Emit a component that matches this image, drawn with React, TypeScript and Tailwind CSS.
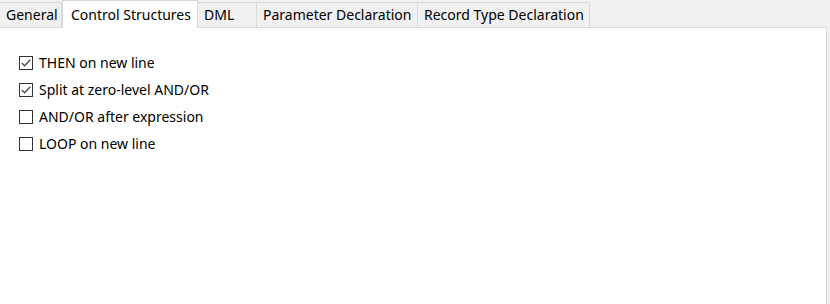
import React from "react";

const tabs = [
    { label: "General", w: "w-[62px]" },
    { label: "Control Structures", w: "w-[136px]" },
    { label: "DML", w: "w-[59px]" },
    { label: "Parameter Declaration", w: "w-[161px]" },
    { label: "Record Type Declaration", w: "w-[172px]" },
];

const options = [
    { label: "THEN on new line", checked: true },
    { label: "Split at zero-level AND/OR", checked: true },
    { label: "AND/OR after expression", checked: false },
    { label: "LOOP on new line", checked: false },
];

const CheckBox = ({ checked }: { checked: boolean }) => (
    <span className="flex h-[14px] w-[14px] shrink-0 items-center justify-center border border-[#333333] bg-white">
        {checked && (
            <svg width="12" height="12" viewBox="0 0 12 12">
                <path d="M1.8 6 L4.6 8.8 L10.3 2.8" fill="none" stroke="#4a4a4a" strokeWidth="1.3" />
            </svg>
        )}
    </span>
);

export default function App() {
    return (
        <div className="flex h-[304px] w-[830px] flex-col bg-[#f0f0f0] text-[14px] text-black" style={{ fontFamily: '"Noto Sans", "Open Sans", sans-serif' }}>
            <div className="flex h-[27px] items-end">
                {tabs.map((t, i) =>
                    i === 1 ? (
                        <div key={t.label} className={"relative z-10 -mb-px flex h-[28px] shrink-0 items-start border-x border-t border-[#d9d9d9] bg-white pl-[8px] pt-[3px] " + t.w}>
                            {t.label}
                        </div>
                    ) : (
                        <div key={t.label} className={"flex h-[25px] shrink-0 items-center border-t border-r border-[#d9d9d9] bg-[#f0f0f0] pb-[1px] pl-[6px] " + t.w}>
                            {t.label}
                        </div>
                    )
                )}
            </div>
            <div className="mr-[3px] flex flex-1 flex-col gap-[8px] border-t border-r border-[#d9d9d9] bg-white pl-[19px] pt-[25px]">
                {options.map((o) => (
                    <label key={o.label} className="flex h-[19px] items-center gap-[6px]">
                        <CheckBox checked={o.checked} />
                        <span>{o.label}</span>
                    </label>
                ))}
            </div>
        </div>
    );
}
